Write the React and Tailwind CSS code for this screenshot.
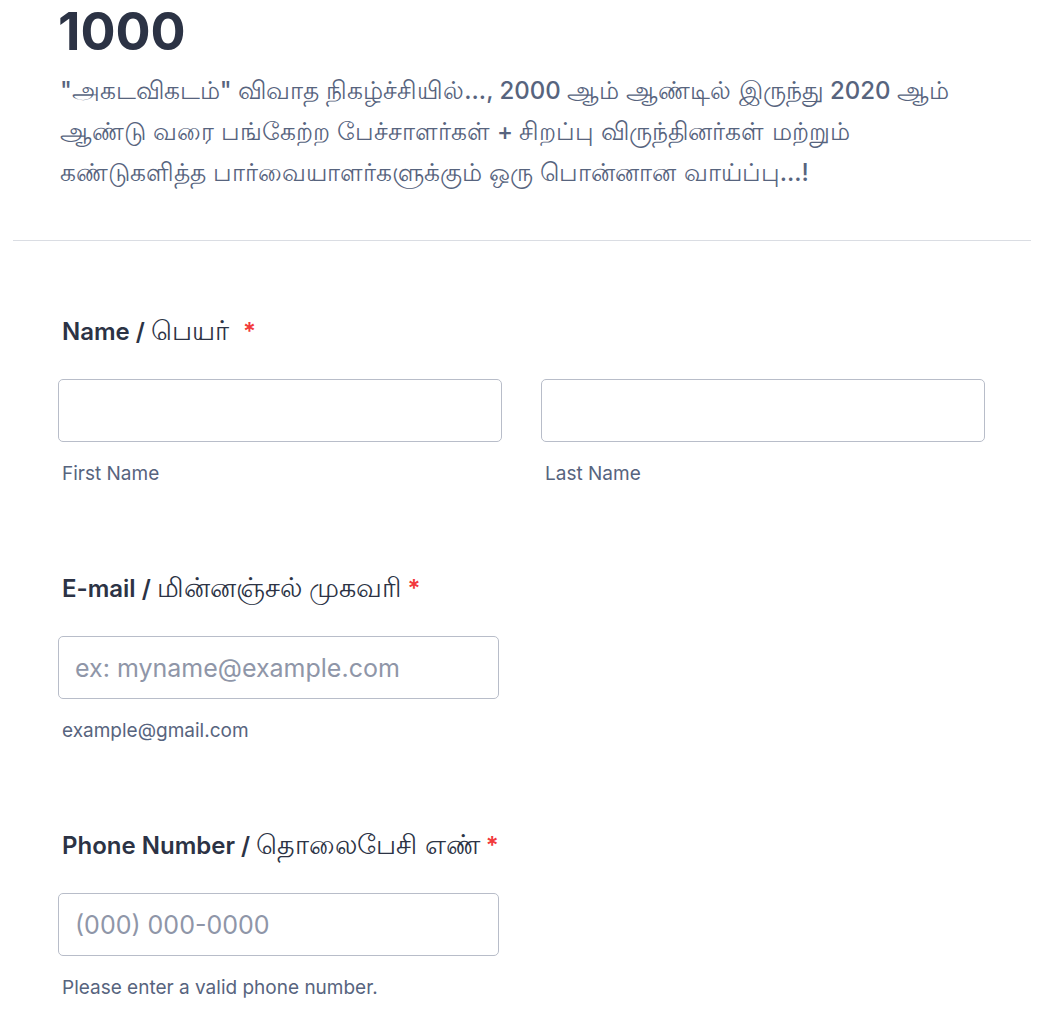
import React from "react";

const fontStack = { fontFamily: "Inter, 'Noto Sans', 'DejaVu Sans', sans-serif" };

// the fallback Tamil face runs small next to Inter, so bump Tamil runs a bit
const TAMIL_RUN = /([\u0B80-\u0BFF]+(?:\s+[\u0B80-\u0BFF]+)*)/;

function Mixed({ text, size = "text-[1.12em]" }) {
  return text.split(TAMIL_RUN).map((part, i) =>
    TAMIL_RUN.test(part) ? (
      <span key={i} className={`${size} font-normal leading-[0]`}>
        {part}
      </span>
    ) : (
      <React.Fragment key={i}>{part}</React.Fragment>
    )
  );
}

function Label({ latin, tamil, gap = "ml-1" }) {
  return (
    <label className="block text-[24px] leading-[36px] font-semibold text-[#2c3345] pl-[4px]">
      {latin} <Mixed text={tamil} />
      <span className={`${gap} text-[#f23a3c]`}>*</span>
    </label>
  );
}

function SubLabel({ children }) {
  return (
    <p className="mt-[18px] pl-[4px] text-[19px] leading-[28px] text-[#57647e]">
      {children}
    </p>
  );
}

function TextInput({ placeholder = "", className = "" }) {
  return (
    <input
      type="text"
      placeholder={placeholder}
      className={`block h-[63px] rounded-[5px] border border-[#b8bdc9] bg-white px-4 text-[25px] text-[#2c3345] placeholder:text-[#8f96a8] outline-none ${className}`}
    />
  );
}

const DESCRIPTION_LINES = [
  '"அகடவிகடம்" விவாத நிகழ்ச்சியில்..., 2000 ஆம் ஆண்டில் இருந்து 2020 ஆம்',
  "ஆண்டு வரை பங்கேற்ற பேச்சாளர்கள் + சிறப்பு விருந்தினர்கள் மற்றும்",
  "கண்டுகளித்த பார்வையாளர்களுக்கும் ஒரு பொன்னான வாய்ப்பு...!",
];

export default function App() {
  return (
    <div className="min-h-screen bg-white" style={fontStack}>
      {/* ===== HEADER ===== */}
      <div className="px-[58px]">
        <h1 className="text-[52px] leading-[64px] font-bold text-[#2c3345]">1000</h1>
        <div className="mt-[6px] pl-[2px] text-[24px] leading-[41px] font-medium text-[#57647e]">
          {DESCRIPTION_LINES.map((line) => (
            <p key={line} className="whitespace-nowrap">
              <Mixed text={line} size="text-[1.062em]" />
            </p>
          ))}
        </div>
      </div>

      <div className="mx-[13px] mt-[47px] border-t border-[#dadde3]" />

      {/* ===== FORM ===== */}
      <div className="px-[58px] pt-[73px]">
        {/* Name */}
        <div>
          <Label latin="Name /" tamil="பெயர்" gap="ml-[14px]" />
          <div className="mt-[29px] grid grid-cols-[444px_444px] gap-x-[39px]">
            <div>
              <TextInput className="w-full" />
              <SubLabel>First Name</SubLabel>
            </div>
            <div>
              <TextInput className="w-full" />
              <SubLabel>Last Name</SubLabel>
            </div>
          </div>
        </div>

        {/* Email */}
        <div className="mt-[83px]">
          <Label latin="E-mail /" tamil="மின்னஞ்சல் முகவரி" gap="ml-[6px]" />
          <TextInput placeholder="ex: myname@example.com" className="mt-[29px] w-[441px]" />
          <SubLabel>example@gmail.com</SubLabel>
        </div>

        {/* Phone */}
        <div className="mt-[83px]">
          <Label latin="Phone Number /" tamil="தொலைபேசி எண்" gap="ml-[6px]" />
          <TextInput placeholder="(000) 000-0000" className="mt-[29px] w-[441px]" />
          <SubLabel>Please enter a valid phone number.</SubLabel>
        </div>
      </div>
    </div>
  );
}
